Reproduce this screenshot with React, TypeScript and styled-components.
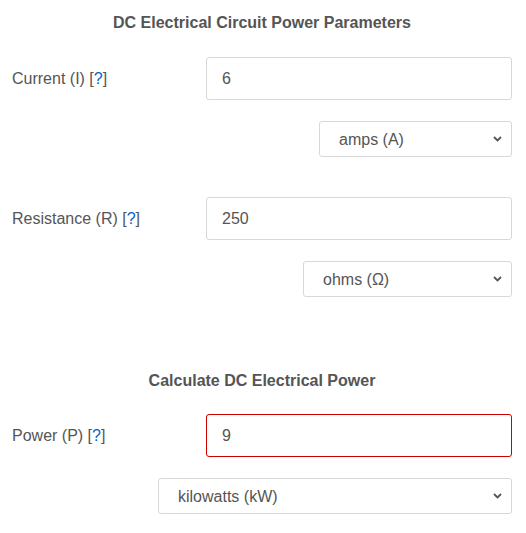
import React from "react";
import styled, { createGlobalStyle } from "styled-components";

const GlobalStyle = createGlobalStyle`
  body {
    margin: 0;
    background: #fff;
    font-family: "Liberation Sans", Arial, sans-serif;
    color: #555;
  }
`;

const Form = styled.div`
  width: 526px;
  box-sizing: border-box;
  padding: 13px 14px 0 12px;
`;

const Heading = styled.div<{ $top: number }>`
  margin-top: ${(p) => p.$top}px;
  font-size: 16px;
  line-height: 20px;
  font-weight: bold;
  text-align: center;
  color: #555;
`;

const FieldRow = styled.div<{ $top: number }>`
  display: flex;
  align-items: center;
  margin-top: ${(p) => p.$top}px;
`;

const Label = styled.label`
  width: 194px;
  flex-shrink: 0;
  font-size: 16px;
  color: #555;
`;

const Help = styled.a`
  color: #0066cc;
  text-decoration: none;
`;

const Input = styled.input<{ $error?: boolean }>`
  flex: 1;
  min-width: 0;
  height: 43px;
  box-sizing: border-box;
  padding: 0 15px;
  border: 1px solid ${(p) => (p.$error ? "#cc0000" : "#d8d8d8")};
  border-radius: 3px;
  font-family: inherit;
  font-size: 16px;
  color: #555;
  outline: none;
`;

const UnitRow = styled.div`
  display: flex;
  justify-content: flex-end;
  margin-top: 21px;
`;

const SelectWrap = styled.div<{ $width: number }>`
  position: relative;
  width: ${(p) => p.$width}px;
`;

const Select = styled.select`
  display: block;
  width: 100%;
  height: 36px;
  box-sizing: border-box;
  padding: 0 24px 0 19px;
  border: 1px solid #d8d8d8;
  border-radius: 3px;
  background: #fff;
  font-family: inherit;
  font-size: 16px;
  color: #555;
  outline: none;
  appearance: none;
  -webkit-appearance: none;
`;

const Chevron = styled.svg`
  position: absolute;
  right: 10px;
  top: 15px;
  width: 9px;
  height: 6px;
  pointer-events: none;
`;

type FieldProps = {
  label: string;
  value: string;
  unit: string;
  unitWidth: number;
  top: number;
  error?: boolean;
};

function Field({ label, value, unit, unitWidth, top, error }: FieldProps) {
  return (
    <>
      <FieldRow $top={top}>
        <Label>
          {label} [<Help href="#">?</Help>]
        </Label>
        <Input $error={error} defaultValue={value} />
      </FieldRow>
      <UnitRow>
        <SelectWrap $width={unitWidth}>
          <Select defaultValue={unit}>
            <option>{unit}</option>
          </Select>
          <Chevron viewBox="0 0 9 6">
            <path d="M1 1l3.5 3.5L8 1" fill="none" stroke="#555" strokeWidth="1.8" />
          </Chevron>
        </SelectWrap>
      </UnitRow>
    </>
  );
}

export default function App() {
  return (
    <>
      <GlobalStyle />
      <Form>
        <Heading $top={0}>DC Electrical Circuit Power Parameters</Heading>
        <Field label="Current (I)" value="6" unit="amps (A)" unitWidth={193} top={24} />
        <Field label="Resistance (R)" value="250" unit="ohms (Ω)" unitWidth={209} top={40} />
        <Heading $top={74}>Calculate DC Electrical Power</Heading>
        <Field label="Power (P)" value="9" unit="kilowatts (kW)" unitWidth={354} top={23} error />
      </Form>
    </>
  );
}
